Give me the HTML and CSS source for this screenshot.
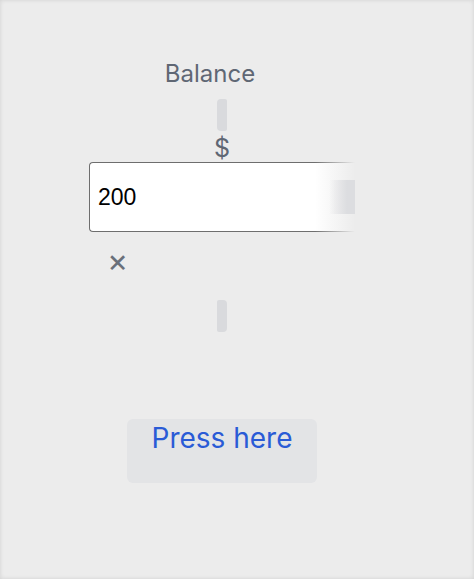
FILE: index.html
```html
<!DOCTYPE html>
<html lang="en">
<head>
    <meta charset="UTF-8">
    <meta name="viewport" content="width=device-width, initial-scale=1.0">
    <title>Balance</title>
    <link rel="stylesheet" href="styles.css">
</head>
<body>
    <div class="screen">
        <div class="column">
            <div class="title">Balance</div>
            <div class="pill"></div>
            <div class="currency">$</div>
            <div class="field">
                <input type="text" class="amount" value="200">
                <div class="fade"><span class="handle"></span></div>
            </div>
            <div class="clear-row"><span class="clear">&times;</span></div>
            <div class="pill pill-low"></div>
            <div class="btn-row">
                <button class="press">Press here</button>
            </div>
        </div>
    </div>
</body>
</html>
```

FILE: styles.css
```css
html, body{
    margin: 0;
    padding: 0;
}
body{
    font-family: "Inter", "Liberation Sans", sans-serif;
    background: #ececec;
}
.screen{
    width: 474px;
    height: 579px;
    box-sizing: border-box;
    box-shadow: inset 0 0 4px rgba(0,0,0,0.12);
    padding-top: 60px;
}
.column{
    width: 266px;
    margin-left: 89px;
    display: flex;
    flex-direction: column;
    align-items: center;
}
.title{
    font-size: 24px;
    color: #5f6774;
    height: 28px;
    line-height: 28px;
    margin-right: 24px;
}
.pill{
    width: 10px;
    height: 32px;
    background: #d9dadd;
    border-radius: 4px 2px 2px 4px;
    margin-top: 11px;
}
.currency{
    font-size: 25px;
    color: #5f6774;
    height: 30px;
    line-height: 30px;
    margin-top: 2px;
    margin-bottom: -1px;
}
.field{
    width: 266px;
    height: 70px;
    box-sizing: border-box;
    border: 1px solid #6e6e6e;
    border-right: none;
    border-radius: 4px 0 0 4px;
    background: #fff;
    display: flex;
    align-items: center;
    position: relative;
}
.amount{
    border: none;
    outline: none;
    background: transparent;
    font-family: "Liberation Sans", sans-serif;
    font-size: 23px;
    color: #000;
    padding: 0 0 0 8px;
    width: 200px;
}
.fade{
    position: absolute;
    right: 0;
    top: -1px;
    bottom: -1px;
    width: 40px;
    background: linear-gradient(to right, rgba(236,236,236,0), #ececec);
    display: flex;
    align-items: center;
    justify-content: flex-end;
}
.handle{
    width: 26px;
    height: 34px;
    background: linear-gradient(to right, rgba(220,221,224,0), #dcdde0 70%);
}
.clear-row{
    align-self: stretch;
    padding-left: 18px;
    height: 58px;
    display: flex;
    align-items: center;
}
.clear{
    font-size: 32px;
    color: #6a707a;
    line-height: 32px;
}
.pill-low{
    margin-top: 10px;
    border-radius: 2px 4px 4px 2px;
}
.btn-row{
    margin-top: 87px;
}
.press{
    width: 190px;
    height: 64px;
    border: none;
    border-radius: 6px;
    background: #e3e4e6;
    color: #2a5bd6;
    font-family: "Inter", "Liberation Sans", sans-serif;
    font-size: 28px;
    padding: 2px 0 0 0;
    display: flex;
    justify-content: center;
    align-items: flex-start;
}
```
